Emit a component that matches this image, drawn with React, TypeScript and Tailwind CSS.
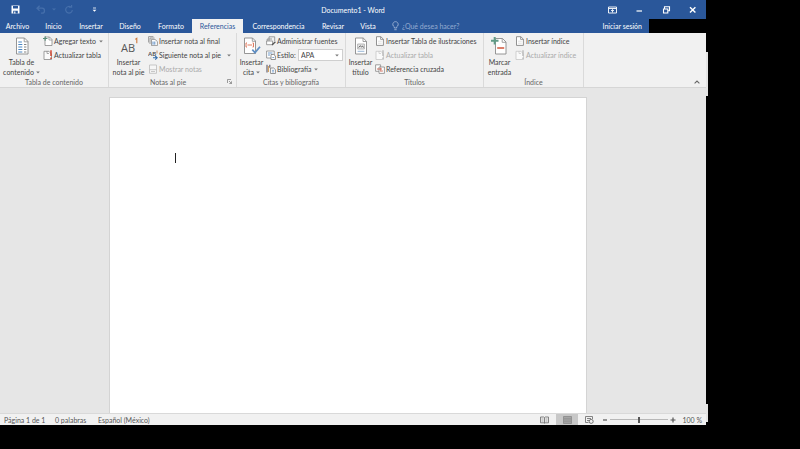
import type { ReactNode } from 'react';

const tabs = [
  { name: 'Archivo', width: 'w-[35px]' },
  { name: 'Inicio', width: 'w-[37px]' },
  { name: 'Insertar', width: 'w-[38px]' },
  { name: 'Diseño', width: 'w-[40px]' },
  { name: 'Formato', width: 'w-[42px]' },
  { name: 'Referencias', width: 'w-[51px]' },
  { name: 'Correspondencia', width: 'w-[71px]' },
  { name: 'Revisar', width: 'w-[38px]' },
  { name: 'Vista', width: 'w-[32px]' },
];

function Svg({ w, h, children }: { w: number; h: number; children: ReactNode }) {
  return (
    <svg width={w} height={h} viewBox={`0 0 ${w} ${h}`} fill="none" className="shrink-0" aria-hidden="true">
      {children}
    </svg>
  );
}

function Arrow() {
  return (
    <svg width="4" height="3" viewBox="0 0 4 3" className="inline-block shrink-0" aria-hidden="true">
      <path d="M0.2 0.5h3.6L2 2.6z" fill="#777" />
    </svg>
  );
}

/* Small ribbon icons, 10 x 10 */
const AddTextIcon = () => (
  <Svg w={10} h={10}>
    <path d="M2 1h4.5L9 3.5V9.5H2z" fill="#fff" stroke="#888" strokeWidth=".8" />
    <path d="M6 1v3h3" stroke="#888" strokeWidth=".7" />
    <path d="M0 2.5h4.5M2.2 .3v4.4" stroke="#5b8f7b" strokeWidth="1.1" />
  </Svg>
);
const UpdateIcon = ({ muted }: { muted?: boolean }) => (
  <Svg w={10} h={10}>
    <path d="M1 1.3h5L8.5 4v5.5H1z" fill="#fafafa" stroke={muted ? '#c6c6c6' : '#888'} strokeWidth=".8" />
    <path d="M4 1v2.5h2" stroke={muted ? '#c6c6c6' : '#888'} strokeWidth=".7" />
    <path d="M8 .3v5.8M8 7.5v1.6" stroke={muted ? '#bdbdbd' : '#d2452f'} strokeWidth="1.5" />
  </Svg>
);
const EndnoteIcon = () => (
  <Svg w={10} h={10}>
    <path d="M.6 6.5V.6h4.8M2 8V2h4.5" stroke="#888" strokeWidth=".8" />
    <path d="M3.5 3.4H7L9.4 5.6v4H3.5z" fill="#fff" stroke="#888" strokeWidth=".8" />
    <path d="M5 5.5v3.2M6.8 5.5v3.2" stroke="#4a80bd" strokeWidth=".9" />
  </Svg>
);
const NextNoteIcon = () => (
  <Svg w={10} h={10}>
    <text x="0" y="5.6" fontSize="6" fontWeight="700" fill="#555" fontFamily="Lato, sans-serif">AB</text>
    <path d="M9 .5v3" stroke="#c87d4a" strokeWidth=".8" />
    <path d="M5 7.8h4M7.2 6 9.2 7.8 7.2 9.6" stroke="#356fae" strokeWidth="1.1" />
  </Svg>
);
const ShowNotesIcon = () => (
  <Svg w={10} h={10}>
    <path d="M1.5 1h7v8.3h-7z" fill="#f6f6f6" stroke="#bbb" strokeWidth=".8" />
    <path d="M1.5 5.7h7M3 7.5h4" stroke="#bbb" strokeWidth=".8" />
  </Svg>
);
const SourcesIcon = () => (
  <Svg w={10} h={10}>
    <path d="M3 5V.8h5.7V5M1.2 6V3H6" stroke="#888" strokeWidth=".8" />
    <path d="M.6 5h6v3.7h-6z" fill="#fff" stroke="#888" strokeWidth=".8" />
    <path d="M6 9 9.4 5.7" stroke="#555" strokeWidth="1.3" />
  </Svg>
);
const StyleIcon = () => (
  <Svg w={10} h={10}>
    <path d="M.6 1h7.6v7H.6z" fill="#fff" stroke="#888" strokeWidth=".8" />
    <path d="M2 3h4.5M2 5h2" stroke="#4a80bd" strokeWidth=".8" />
    <path d="M5 4.5h2.8l1.6 1.4v3.6H5z" fill="#fff" stroke="#777" strokeWidth=".8" />
    <path d="M6.3 7.5h1.8" stroke="#4a80bd" strokeWidth=".7" />
  </Svg>
);
const BibliographyIcon = () => (
  <Svg w={10} h={10}>
    <path d="M1 .7v7.8M3.8 .7v3" stroke="#667" strokeWidth="1.2" />
    <path d="M2.4 2v6" stroke="#d09a50" strokeWidth="1" />
    <path d="M4.6 4h3l1.8 1.6v3.9H4.6z" fill="#fff" stroke="#777" strokeWidth=".8" />
    <path d="M6 6.3h2M6 7.9h2" stroke="#4a80bd" strokeWidth=".7" />
  </Svg>
);
const SheetIcon = () => (
  <Svg w={10} h={10}>
    <path d="M1.5 .7h4.3l2.6 2.5v6.2H1.5z" fill="#fff" stroke="#777" strokeWidth=".8" />
    <path d="M5.6 .8v2.6h2.6" stroke="#777" strokeWidth=".7" />
    <path d="M3 5.2h3.8M3 7.2h3.8" stroke="#ccc" strokeWidth=".6" />
  </Svg>
);
const CrossRefIcon = () => (
  <Svg w={10} h={10}>
    <path d="M.6 .8h5v6.5h-5z" fill="#fff" stroke="#888" strokeWidth=".8" />
    <path d="M4 3h5.4v6.4H4z" fill="#fff" stroke="#888" strokeWidth=".8" />
    <path d="M2 5h4M5 3.8 6.6 5 5 6.3M7.8 7H5" stroke="#c65b4a" strokeWidth=".9" />
  </Svg>
);

/* Large ribbon icons, 18 x 18 */
const TocIcon = () => (
  <Svg w={18} h={18}>
    <path d="M3.5 1h8l3.5 3.5V17H3.5z" fill="#fff" stroke="#8a8a8a" strokeWidth=".9" />
    <path d="M11.2 1v3.8H15" stroke="#8a8a8a" strokeWidth=".8" />
    <path d="M5.3 5h3.6M5.3 7.5h4M5.3 10h4M5.3 12.5h4M5.3 15h4" stroke="#4a87c4" strokeWidth="1" />
    <path d="M11 7.5h2.4M11 10h2.4M11 12.5h2.4M11 15h2.4" stroke="#777" strokeWidth=".9" />
  </Svg>
);
const FootnoteIcon = () => (
  <Svg w={18} h={18}>
    <text x="1" y="14.5" fontSize="11" fill="#555" fontFamily="Open Sans, sans-serif">AB</text>
    <path d="M15.2 2.4 16.8 1.3v5" stroke="#cf7a3d" strokeWidth="1.1" />
  </Svg>
);
const CitationIcon = () => (
  <Svg w={18} h={18}>
    <path d="M1.5 1h8l3 3v12.5h-11z" fill="#fff" stroke="#8a8a8a" strokeWidth=".9" />
    <path d="M9.3 1v3.3h3.2" stroke="#8a8a8a" strokeWidth=".8" />
    <path d="M4 6H3v4h1M9.5 6h1v4h-1M4.5 8h4.6" stroke="#e07b5f" strokeWidth="1" />
    <path d="M9.3 12.6l2.7 3L17 9.7" stroke="#5f8fc4" strokeWidth="1.7" />
  </Svg>
);
const CaptionIcon = () => (
  <Svg w={18} h={18}>
    <path d="M3.5 1h7.7l3.3 3.3V17h-11z" fill="#fff" stroke="#8a8a8a" strokeWidth=".9" />
    <path d="M11 1v3.5h3.5" stroke="#8a8a8a" strokeWidth=".8" />
    <path d="M5.6 7h6.8v5H5.6z" fill="#e6e6e6" stroke="#aaa" strokeWidth=".8" />
    <path d="M6.7 10.5l1.5-1.7 1.3 1 1-.8 1 1.5" stroke="#555" strokeWidth=".9" />
    <path d="M5.6 14.3h6.8" stroke="#7da3cc" strokeWidth=".8" />
  </Svg>
);
const MarkIcon = () => (
  <Svg w={18} h={18}>
    <path d="M4.5 1.5h7L15 5v12H4.5z" fill="#fff" stroke="#8a8a8a" strokeWidth=".9" />
    <path d="M11.2 1.5v3.8H15" stroke="#8a8a8a" strokeWidth=".8" />
    <path d="M0 3.8h7.5M3.7 0v7.5" stroke="#619b87" strokeWidth="2" />
    <path d="M6.2 11h7" stroke="#d2553a" strokeWidth="1.5" />
  </Svg>
);

function Group({ title, width, launcher, children }: { title: string; width: string; launcher?: boolean; children: ReactNode }) {
  return (
    <section aria-label={title} className={`${width} flex shrink-0 flex-col border-r border-[#dadada]`}>
      <div className="flex h-[43px] pt-px">{children}</div>
      <div className="flex h-[11px] items-center text-[#666]">
        <h2 className="flex-1 text-center">{title}</h2>
        {launcher && (
          <button aria-label="Opciones de notas al pie" className="mr-1 w-[5px]">
            <Svg w={5} h={5}>
              <path d="M.5 4V.5H4M2 2l2.5 2.5M4.5 2.3v2.2H2.3" stroke="#777" strokeWidth=".7" />
            </Svg>
          </button>
        )}
      </div>
    </section>
  );
}

function Big({ icon, first, second, width, arrow }: { icon: ReactNode; first: string; second: string; width: string; arrow?: boolean }) {
  return (
    <button className={`${width} flex shrink-0 flex-col items-center pt-[3px] leading-[10px] whitespace-nowrap`}>
      {icon}
      <span className="pt-0.5">{first}</span>
      <span className="flex items-center gap-0.5">
        {second}
        {arrow && <Arrow />}
      </span>
    </button>
  );
}

function Small({ icon, label, arrow, wide, disabled }: { icon: ReactNode; label: string; arrow?: boolean; wide?: boolean; disabled?: boolean }) {
  return (
    <button
      disabled={disabled}
      className={`flex h-[14px] items-center gap-px whitespace-nowrap ${disabled ? 'text-[#aaa]' : ''}`}
    >
      {icon}
      <span>{label}</span>
      {arrow && <span className={`flex ${wide ? 'pl-[5px]' : 'pl-0.5'}`}><Arrow /></span>}
    </button>
  );
}

function TitleBar() {
  return (
    <header className="relative flex h-[19px] items-center justify-between pr-2 pl-[11px]">
      <div className="flex items-center">
        <button aria-label="Guardar">
          <Svg w={9} h={9}>
            <path d="M.5.5h8v8h-8z" fill="#fff" />
            <path d="M2 1h5v2.6H2zM2.2 5.8h4.6v2.7H2.2z" fill="#2a579a" />
            <path d="M3.2 6.6h1.2v1.9H3.2z" fill="#fff" />
          </Svg>
        </button>
        <button aria-label="Deshacer" className="ml-4 flex items-center gap-1.5">
          <Svg w={10} h={9}>
            <path d="M1 3.2h5a2.5 2.5 0 0 1 0 5H5M3.6.7 1 3.2l2.6 2.5" stroke="#456fab" strokeWidth="1.3" />
          </Svg>
          <Svg w={4} h={3}><path d="M0 .5h4L2 2.6z" fill="#456fab" /></Svg>
        </button>
        <button aria-label="Rehacer" className="ml-2">
          <Svg w={10} h={9}>
            <path d="M7 2.1A3.3 3.3 0 1 0 8.3 5M4.8 2.2h2.8V-.2" stroke="#456fab" strokeWidth="1.2" />
          </Svg>
        </button>
        <button aria-label="Personalizar barra de acceso rápido" className="ml-[18px]">
          <Svg w={5} h={6}>
            <path d="M1 1h3" stroke="#fff" strokeWidth=".8" />
            <path d="M.6 2.8h3.8L2.5 4.8z" fill="#fff" />
          </Svg>
        </button>
      </div>
      <h1 className="pointer-events-none absolute inset-x-0 text-center text-white">Documento1 - Word</h1>
      <div className="flex items-center gap-[18px]">
        <button aria-label="Opciones de presentación de la cinta">
          <Svg w={9} h={8}>
            <path d="M.5 1h8v6h-8zM.5 2.5h8" stroke="#fff" strokeWidth=".9" />
            <path d="M4.5 6.5V3.8M3 5l1.5-1.4L6 5" stroke="#fff" strokeWidth=".9" />
          </Svg>
        </button>
        <button aria-label="Minimizar">
          <Svg w={9} h={8}><path d="M1.5 5h5.5" stroke="#fff" strokeWidth="1.2" /></Svg>
        </button>
        <button aria-label="Restaurar">
          <Svg w={9} h={8}>
            <path d="M2.5 2.5V.8h5v4H6M1.5 3h4.3v4H1.5z" stroke="#fff" strokeWidth="1.1" />
          </Svg>
        </button>
        <button aria-label="Cerrar">
          <Svg w={9} h={8}><path d="M1 1.2l5.4 5.4M6.4 1.2 1 6.6" stroke="#fff" strokeWidth="1.4" /></Svg>
        </button>
      </div>
    </header>
  );
}

function TabBar() {
  return (
    <nav aria-label="Cinta de opciones" className="flex h-[14px] items-stretch text-white">
      {tabs.map((t) => (
        <button
          key={t.name}
          className={`${t.width} shrink-0 text-center ${t.name === 'Referencias' ? 'bg-[#f1f1f1] text-[#2a579a]' : ''}`}
        >
          {t.name}
        </button>
      ))}
      <label className="flex flex-1 items-center gap-[3px] pl-2">
        <Svg w={7} h={10}>
          <path d="M2.3 7V5.8A2.7 2.7 0 1 1 4.7 5.8V7zM2.3 8.7h2.4" stroke="#a9bcdb" strokeWidth=".8" />
        </Svg>
        <input
          aria-label="Buscar ayuda"
          placeholder="¿Qué desea hacer?"
          className="h-[14px] w-20 bg-transparent leading-[14px] outline-none placeholder:text-[#94abd0]"
        />
      </label>
      <button className="pr-[7px]">Iniciar sesión</button>
    </nav>
  );
}

function Ribbon() {
  return (
    <div className="relative flex h-[55px] border-b border-[#d6d6d6] bg-[#f1f1f1]">
      <Group title="Tabla de contenido" width="w-[109px]">
        <Big icon={<TocIcon />} first="Tabla de" second="contenido" width="w-[43px]" arrow />
        <div>
          <Small icon={<AddTextIcon />} label="Agregar texto" arrow />
          <Small icon={<UpdateIcon />} label="Actualizar tabla" />
        </div>
      </Group>
      <Group title="Notas al pie" width="w-[128px]" launcher>
        <Big icon={<FootnoteIcon />} first="Insertar" second="nota al pie" width="w-[39px]" />
        <div>
          <Small icon={<EndnoteIcon />} label="Insertar nota al final" />
          <Small icon={<NextNoteIcon />} label="Siguiente nota al pie" arrow wide />
          <Small icon={<ShowNotesIcon />} label="Mostrar notas" disabled />
        </div>
      </Group>
      <Group title="Citas y bibliografía" width="w-[109px]">
        <Big icon={<CitationIcon />} first="Insertar" second="cita" width="w-[29px]" arrow />
        <div>
          <Small icon={<SourcesIcon />} label="Administrar fuentes" />
          <div className="flex h-[14px] items-center gap-px">
            <StyleIcon />
            <label htmlFor="estilo" className="w-5">Estilo:</label>
            <div className="relative flex">
              <select id="estilo" className="h-3 w-[45px] appearance-none border border-[#cfcfcf] bg-white pl-0.5 leading-[10px]">
                <option>APA</option>
              </select>
              <span className="pointer-events-none absolute inset-y-0 right-1 flex items-center"><Arrow /></span>
            </div>
          </div>
          <Small icon={<BibliographyIcon />} label="Bibliografía" arrow />
        </div>
      </Group>
      <Group title="Títulos" width="w-[138px]">
        <Big icon={<CaptionIcon />} first="Insertar" second="título" width="w-[29px]" />
        <div>
          <Small icon={<SheetIcon />} label="Insertar Tabla de ilustraciones" />
          <Small icon={<UpdateIcon muted />} label="Actualizar tabla" disabled />
          <Small icon={<CrossRefIcon />} label="Referencia cruzada" />
        </div>
      </Group>
      <Group title="Índice" width="w-[100px]">
        <Big icon={<MarkIcon />} first="Marcar" second="entrada" width="w-[31px]" />
        <div>
          <Small icon={<SheetIcon />} label="Insertar índice" />
          <Small icon={<UpdateIcon muted />} label="Actualizar índice" disabled />
        </div>
      </Group>
      <button aria-label="Contraer la cinta" className="mt-auto mr-1.5 mb-[3px] ml-auto">
        <Svg w={6} h={4}><path d="M.6 3.3 3 1l2.4 2.3" stroke="#666" strokeWidth="1.1" /></Svg>
      </button>
      <span className="absolute top-[19px] left-full h-[44px] w-0.5 bg-[#e4e4e4]" />
    </div>
  );
}

function StatusBar() {
  return (
    <footer className="relative flex h-3 items-center border-t border-[#d9d9d9] bg-[#f1f1f1] pr-1 pl-1 text-[#555]">
      <span className="w-[51px]">Página 1 de 1</span>
      <span className="w-[43px]">0 palabras</span>
      <span className="flex-1">Español (México)</span>
      <button aria-label="Modo de lectura" className="flex w-6 justify-center">
        <Svg w={9} h={8}>
          <path d="M.5 1h3.3l.7.6.7-.6h3.3v5.8H.5zM4.5 1.5V7.5" stroke="#777" strokeWidth=".9" />
          <path d="M1.5 3h2M1.5 5h2M5.5 3h2M5.5 5h2" stroke="#888" strokeWidth=".7" />
        </Svg>
      </button>
      <button aria-label="Diseño de impresión" className="flex w-[22px] items-center justify-center self-stretch bg-[#c8c8c8]">
        <Svg w={9} h={8}>
          <path d="M.5.5h8v7h-8z" fill="#aaa" stroke="#888" strokeWidth=".8" />
          <path d="M1 2.3h7M1 4h7M1 5.8h7" stroke="#888" strokeWidth=".7" />
        </Svg>
      </button>
      <button aria-label="Diseño web" className="flex w-[22px] justify-center">
        <Svg w={9} h={8}>
          <path d="M7.5 3V.5h-7v6h3M2 2.5h4M2 4.5h2" stroke="#777" strokeWidth=".9" />
          <circle cx="6.2" cy="5.4" r="2" stroke="#666" strokeWidth=".9" />
        </Svg>
      </button>
      <button aria-label="Alejar" className="ml-0.5 flex">
        <Svg w={6} h={6}><path d="M1 3h4" stroke="#555" strokeWidth="1.2" /></Svg>
      </button>
      <input
        type="range"
        aria-label="Zoom"
        min={10}
        max={190}
        defaultValue={100}
        className="mx-0.5 h-2 w-[58px] appearance-none bg-[linear-gradient(#b8b8b8,#b8b8b8)] bg-[length:100%_1px] bg-center bg-no-repeat [&::-webkit-slider-thumb]:h-1.5 [&::-webkit-slider-thumb]:w-0.5 [&::-webkit-slider-thumb]:appearance-none [&::-webkit-slider-thumb]:bg-[#555]"
      />
      <button aria-label="Acercar" className="mr-1.5 flex">
        <Svg w={6} h={6}><path d="M.5 3h5M3 .5v5" stroke="#555" strokeWidth="1.2" /></Svg>
      </button>
      <button>100 %</button>
      <span className="absolute top-[-10px] left-full h-[18px] w-0.5 bg-[#e4e4e4]" />
    </footer>
  );
}

export default function App() {
  return (
    <div className="flex min-h-screen flex-col bg-black pr-[94px] pb-6 font-['Lato','Open_Sans',sans-serif] text-[7px] leading-[10px] text-[#444]">
      <div className="bg-[#2a579a]"><TitleBar /></div>
      <div className="mr-[57px] bg-[#2a579a]"><TabBar /></div>
      <Ribbon />
      <main className="flex flex-1 justify-center bg-[#e6e6e6] pt-[9px] pr-2.5">
        <div role="textbox" aria-label="Documento" className="w-[478px] border border-b-0 border-[#d4d4d4] bg-white pt-[55px] pl-[65px]">
          <div className="h-[10px] w-px bg-[#222]" />
        </div>
      </main>
      <StatusBar />
    </div>
  );
}
